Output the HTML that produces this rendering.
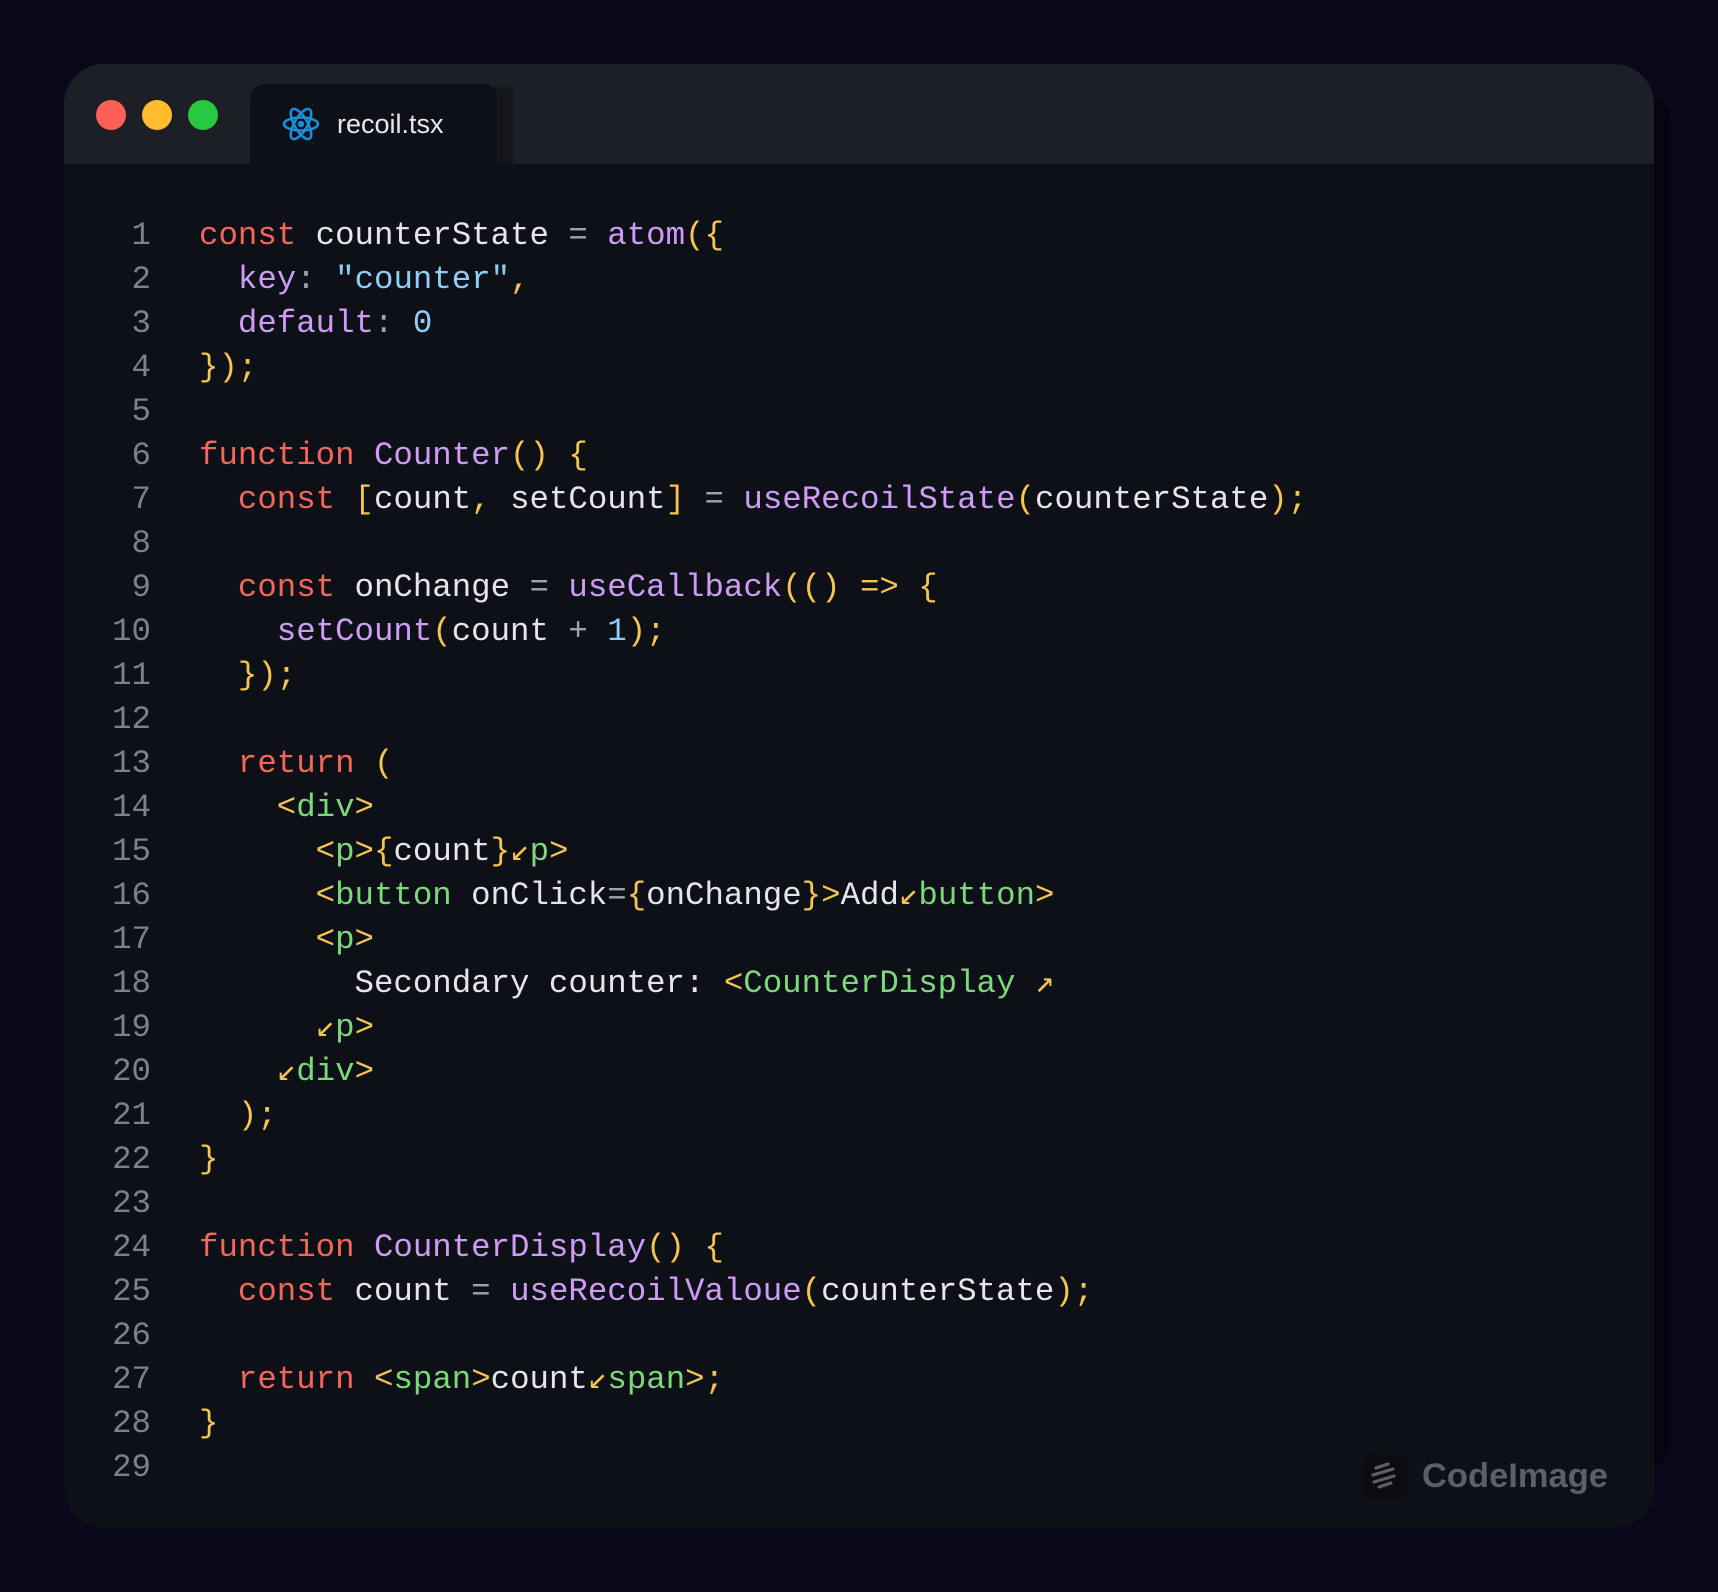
<!DOCTYPE html>
<html><head><meta charset="utf-8"><style>
html,body{margin:0;padding:0}
body{width:1718px;height:1592px;background:#08081a;position:relative;overflow:hidden;font-family:"Liberation Sans",sans-serif}
.shadow{position:absolute;left:96px;top:96px;width:1574px;height:1371px;background:#05050f;border-radius:24px}
.win{position:absolute;left:64px;top:64px;width:1590px;height:1464px;background:#0d1017;border-radius:40px;overflow:hidden}
.head{position:absolute;left:0;top:0;width:100%;height:100px;background:#1c1f26}
.dot{position:absolute;top:36px;width:30px;height:30px;border-radius:50%}
.tabsh{position:absolute;left:200px;top:23px;width:249px;height:77px;background:#14161c}
.tab{position:absolute;left:186px;top:20px;width:247px;height:80px;background:#0d1017;border-radius:14px 14px 0 0}
.tab span{position:absolute;left:87px;top:25px;font-size:27px;color:#e8e8ea}
.code{position:absolute;left:0;top:150px;font-family:"Liberation Mono",monospace;font-size:32.4px;white-space:pre;color:#e6e6ea}
.l{position:absolute;height:44px;line-height:44px;left:0}
.n{position:absolute;width:87px;text-align:right;color:#7d818a}
.t{position:absolute;left:135px}
.k{color:#f4665c}.p{color:#cf9bf5}.y{color:#f5c451}.s{color:#8fcdf5}.g{color:#7ed77b}.o{color:#a0a3ab}
.wm{position:absolute;left:1298px;top:1390px;width:46px;height:46px;border-radius:12px;background:#0a0c10}
.wmt{position:absolute;left:1358px;top:1393px;font-size:34.5px;font-weight:bold;color:#5d5f66}
</style></head><body>
<div class="shadow"></div>
<div class="win">
<div class="head">
<div class="dot" style="left:32px;background:#fe5f57"></div>
<div class="dot" style="left:78px;background:#febc2e"></div>
<div class="dot" style="left:124px;background:#28c840"></div>
<div class="tabsh"></div>
<div class="tab">
<svg style="position:absolute;left:32px;top:22px" width="38" height="36" viewBox="-19 -18 38 36" fill="none" stroke="#1b8ed8" stroke-width="2.6">
<ellipse rx="17" ry="6.5"/><ellipse rx="17" ry="6.5" transform="rotate(60)"/><ellipse rx="17" ry="6.5" transform="rotate(120)"/><circle r="3.2" fill="#1b8ed8" stroke="none"/></svg>
<span>recoil.tsx</span></div>
</div>
<div class="code">
<div class="l" style="top:0"><span class="n">1</span><span class="t"><span class="k">const</span> counterState <span class="o">=</span> <span class="p">atom</span><span class="y">({</span></span></div>
<div class="l" style="top:44px"><span class="n">2</span><span class="t">  <span class="p">key</span><span class="o">:</span> <span class="s">"counter"</span><span class="y">,</span></span></div>
<div class="l" style="top:88px"><span class="n">3</span><span class="t">  <span class="p">default</span><span class="o">:</span> <span class="s">0</span></span></div>
<div class="l" style="top:132px"><span class="n">4</span><span class="t"><span class="y">});</span></span></div>
<div class="l" style="top:176px"><span class="n">5</span></div>
<div class="l" style="top:220px"><span class="n">6</span><span class="t"><span class="k">function</span> <span class="p">Counter</span><span class="y">() {</span></span></div>
<div class="l" style="top:264px"><span class="n">7</span><span class="t">  <span class="k">const</span> <span class="y">[</span>count<span class="y">,</span> setCount<span class="y">]</span> <span class="o">=</span> <span class="p">useRecoilState</span><span class="y">(</span>counterState<span class="y">);</span></span></div>
<div class="l" style="top:308px"><span class="n">8</span></div>
<div class="l" style="top:352px"><span class="n">9</span><span class="t">  <span class="k">const</span> onChange <span class="o">=</span> <span class="p">useCallback</span><span class="y">(() =&gt; {</span></span></div>
<div class="l" style="top:396px"><span class="n">10</span><span class="t">    <span class="p">setCount</span><span class="y">(</span>count <span class="o">+</span> <span class="s">1</span><span class="y">);</span></span></div>
<div class="l" style="top:440px"><span class="n">11</span><span class="t">  <span class="y">});</span></span></div>
<div class="l" style="top:484px"><span class="n">12</span></div>
<div class="l" style="top:528px"><span class="n">13</span><span class="t">  <span class="k">return</span> <span class="y">(</span></span></div>
<div class="l" style="top:572px"><span class="n">14</span><span class="t">    <span class="y">&lt;</span><span class="g">div</span><span class="y">&gt;</span></span></div>
<div class="l" style="top:616px"><span class="n">15</span><span class="t">      <span class="y">&lt;</span><span class="g">p</span><span class="y">&gt;{</span>count<span class="y">}↙</span><span class="g">p</span><span class="y">&gt;</span></span></div>
<div class="l" style="top:660px"><span class="n">16</span><span class="t">      <span class="y">&lt;</span><span class="g">button</span> onClick<span class="o">=</span><span class="y">{</span>onChange<span class="y">}&gt;</span>Add<span class="y">↙</span><span class="g">button</span><span class="y">&gt;</span></span></div>
<div class="l" style="top:704px"><span class="n">17</span><span class="t">      <span class="y">&lt;</span><span class="g">p</span><span class="y">&gt;</span></span></div>
<div class="l" style="top:748px"><span class="n">18</span><span class="t">        Secondary counter: <span class="y">&lt;</span><span class="g">CounterDisplay</span> <span class="y">↗</span></span></div>
<div class="l" style="top:792px"><span class="n">19</span><span class="t">      <span class="y">↙</span><span class="g">p</span><span class="y">&gt;</span></span></div>
<div class="l" style="top:836px"><span class="n">20</span><span class="t">    <span class="y">↙</span><span class="g">div</span><span class="y">&gt;</span></span></div>
<div class="l" style="top:880px"><span class="n">21</span><span class="t">  <span class="y">);</span></span></div>
<div class="l" style="top:924px"><span class="n">22</span><span class="t"><span class="y">}</span></span></div>
<div class="l" style="top:968px"><span class="n">23</span></div>
<div class="l" style="top:1012px"><span class="n">24</span><span class="t"><span class="k">function</span> <span class="p">CounterDisplay</span><span class="y">() {</span></span></div>
<div class="l" style="top:1056px"><span class="n">25</span><span class="t">  <span class="k">const</span> count <span class="o">=</span> <span class="p">useRecoilValoue</span><span class="y">(</span>counterState<span class="y">);</span></span></div>
<div class="l" style="top:1100px"><span class="n">26</span></div>
<div class="l" style="top:1144px"><span class="n">27</span><span class="t">  <span class="k">return</span> <span class="y">&lt;</span><span class="g">span</span><span class="y">&gt;</span>count<span class="y">↙</span><span class="g">span</span><span class="y">&gt;;</span></span></div>
<div class="l" style="top:1188px"><span class="n">28</span><span class="t"><span class="y">}</span></span></div>
<div class="l" style="top:1232px"><span class="n">29</span></div>
</div>
<div class="wm"><svg width="46" height="46" viewBox="0 0 46 46" stroke="#5d5f66" stroke-width="3.2" stroke-linecap="round"><path d="M14 14l12-4M11 21l20-6M12 28l20-6M17 33l12-4"/></svg></div>
<div class="wmt">CodeImage</div>
</div>
</body></html>
